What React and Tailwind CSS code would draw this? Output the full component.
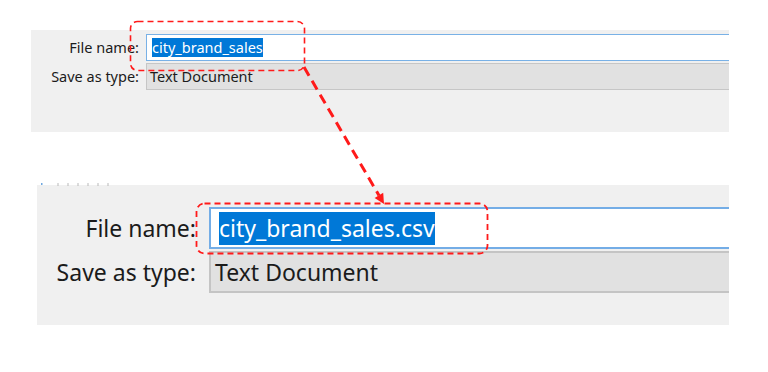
export default function App() {
  return (
    <div className="relative w-[768px] h-[372px] overflow-hidden bg-white text-[#1b1b1b] font-['Noto_Sans',_'Open_Sans',_sans-serif]">
      {/* small dialog crop */}
      <div className="ml-[31px] mt-[30px] w-[698px] h-[102px] bg-[#f0f0f0] pt-[4px] text-[14.5px]">
        <div className="flex items-center h-[27px]">
          <div className="w-[108px] text-right leading-none">File name:</div>
          <div className="ml-[7px] flex-1 h-full flex items-center pl-[5px] bg-white border-y border-l border-[#79b1e6]">
            <span className="inline-block h-[19px] leading-[19px] bg-[#0078d7] text-white">city_brand_sales</span>
          </div>
        </div>
        <div className="flex items-center h-[27px] mt-[2px]">
          <div className="w-[108px] text-right leading-none">Save as type:</div>
          <div className="ml-[7px] flex-1 h-full flex items-center pl-[3px] bg-[#e1e1e1] border-y border-l border-[#c6c6c6]">
            Text Document
          </div>
        </div>
      </div>

      {/* enlarged dialog crop */}
      <div className="ml-[37px] mt-[53px] w-[692px] h-[140px] bg-[#f0f0f0] pt-[22px] text-[23px]">
        <div className="flex items-center h-[42px]">
          <div className="w-[159px] text-right leading-none">File name:</div>
          <div className="ml-[13px] flex-1 h-full flex items-center pl-[8px] bg-white border-y-2 border-l-2 border-[#74ade6]">
            <span className="inline-block h-[33px] leading-[33px] bg-[#0078d7] text-white">city_brand_sales.csv</span>
          </div>
        </div>
        <div className="flex items-center h-[42px] mt-[2px]">
          <div className="w-[159px] text-right leading-none">Save as type:</div>
          <div className="ml-[13px] flex-1 h-full flex items-center pl-[4px] bg-[#e1e1e1] border-y-2 border-l-2 border-[#c4c4c4]">
            Text Document
          </div>
        </div>
      </div>

      {/* red annotations */}
      <svg className="absolute inset-0 pointer-events-none" width="768" height="372" viewBox="0 0 768 372">
        <g stroke="#b9b9b9" strokeWidth="1">
          <line x1="58" y1="183" x2="58" y2="186" />
          <line x1="68" y1="183" x2="68" y2="186" />
          <line x1="78" y1="183" x2="78" y2="186" />
          <line x1="88" y1="183" x2="88" y2="186" />
          <line x1="98" y1="183" x2="98" y2="186" />
          <line x1="108" y1="183" x2="108" y2="186" />
        </g>
        <rect x="41" y="183" width="1.5" height="2" fill="#6fa8e0" />
        <rect x="130.5" y="21.5" width="174" height="49" rx="7" fill="none" stroke="#ff1a1a" strokeWidth="1.6" strokeDasharray="6 4" />
        <rect x="196.5" y="203.5" width="291" height="50" rx="8" fill="none" stroke="#ff1a1a" strokeWidth="1.8" strokeDasharray="6 4" />
        <line x1="304" y1="67" x2="379" y2="195.5" stroke="#ff1a1a" strokeWidth="3" strokeDasharray="10 6" />
        <polygon points="384,204 374.6,198 383.2,192.8" fill="#ff1a1a" />
      </svg>
    </div>
  );
}
